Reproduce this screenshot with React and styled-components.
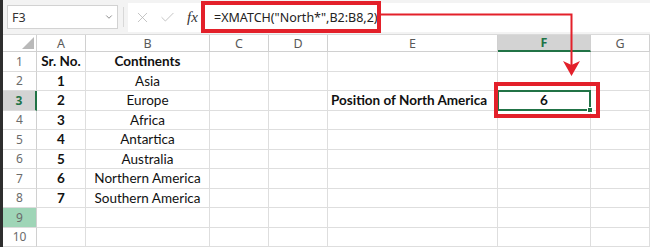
import styled, { createGlobalStyle } from "styled-components";
import { X, Check, ChevronDown } from "lucide-react";

const GlobalStyle = createGlobalStyle`
  html, body { margin: 0; padding: 0; background: #fff; }
  * { box-sizing: border-box; }
`;

const COLS = ["A", "B", "C", "D", "E", "F", "G"];

const data = [
  { no: "Sr. No.", name: "Continents", head: true },
  { no: "1", name: "Asia" },
  { no: "2", name: "Europe" },
  { no: "3", name: "Africa" },
  { no: "4", name: "Antartica" },
  { no: "5", name: "Australia" },
  { no: "6", name: "Northern America" },
  { no: "7", name: "Southern America" },
  { no: "", name: "" },
  { no: "", name: "" },
];

export default function App() {
  return (
    <>
      <GlobalStyle />
      <Page>
        <FormulaBar>
          <NameBox>
            <span>F3</span>
            <ChevronDown size={10} color="#777" strokeWidth={2} />
          </NameBox>
          <Divider />
          <IconGroup>
            <X size={17} color="#b4b4b4" strokeWidth={1.1} />
            <Check size={17} color="#b4b4b4" strokeWidth={1.1} />
            <Fx>fx</Fx>
          </IconGroup>
          <FormulaInput>=XMATCH("North*",B2:B8,2)</FormulaInput>
        </FormulaBar>

        <Sheet>
          <Corner>
            <svg width="12" height="12" viewBox="0 0 12 12">
              <polygon points="12,0 12,12 0,12" fill="#b9b9b9" />
            </svg>
          </Corner>
          {COLS.map((c) => (
            <ColHead key={c} $active={c === "F"}>
              {c}
            </ColHead>
          ))}

          {data.map((row, i) => {
            const r = i + 1;
            return [
              <RowHead key={`h${r}`} $active={r === 3} $picked={r === 9}>
                {r}
              </RowHead>,
              <Cell key={`a${r}`} $bold $center>
                {row.no}
              </Cell>,
              <Cell key={`b${r}`} $bold={row.head} $center>
                {row.name}
              </Cell>,
              <Cell key={`c${r}`} />,
              <Cell key={`d${r}`} />,
              <Cell key={`e${r}`} $bold>
                {r === 3 ? "Position of North America" : ""}
              </Cell>,
              r === 3 ? (
                <ActiveCell key={`f${r}`}>
                  6
                  <FillHandle />
                </ActiveCell>
              ) : (
                <Cell key={`f${r}`} />
              ),
              <Cell key={`g${r}`} />,
            ];
          })}
        </Sheet>

        <FormulaCallout />
        <CellCallout />
        <Arrow width="650" height="90" viewBox="0 0 650 90">
          <polyline
            points="378,14.5 571.5,14.5 571.5,66"
            fill="none"
            stroke="#e3202a"
            strokeWidth="2"
          />
          <polygon points="563,61 571.5,65 580,61 571.5,76" fill="#e3202a" />
        </Arrow>
      </Page>
    </>
  );
}

const Page = styled.div`
  position: relative;
  width: 650px;
  height: 247px;
  overflow: hidden;
  border-left: 3px solid #2e2e2e;
  background: #fff;
  display: flex;
  flex-direction: column;
`;

const FormulaBar = styled.div`
  height: 35px;
  flex-shrink: 0;
  display: flex;
  align-items: center;
  padding: 3px 0 3px 4px;
  background: #f3f3f3;
  border-bottom: 1px solid #dadada;
`;

const NameBox = styled.div`
  width: 111px;
  height: 24px;
  background: #fff;
  border: 1px solid #d2d2d2;
  display: flex;
  align-items: center;
  justify-content: space-between;
  padding: 0 3px 0 4px;
  font-family: "Noto Sans", sans-serif;
  font-size: 12.5px;
  color: #333;
`;

const Divider = styled.div`
  width: 1px;
  height: 20px;
  margin: 0 4px 0 5px;
  background: #d8d8d8;
`;

const IconGroup = styled.div`
  height: 29px;
  width: 77px;
  display: flex;
  align-items: center;
  gap: 8px;
  padding-left: 6px;
  background: #fff;
`;

const Fx = styled.span`
  font-family: "Liberation Serif", serif;
  font-style: italic;
  font-size: 15px;
  color: #333;
  margin-left: 3px;
`;

const FormulaInput = styled.div`
  flex: 1;
  height: 29px;
  background: #fff;
  display: flex;
  align-items: center;
  padding-left: 9px;
  font-family: "Noto Sans", sans-serif;
  font-size: 12.5px;
  color: #222;
  white-space: nowrap;
`;

const Sheet = styled.div`
  display: grid;
  grid-template-columns: 34px 49px 124px 59px 59px 170px 93px 59px;
  grid-template-rows: 17px repeat(10, 19.5px);
`;

const Corner = styled.div`
  display: flex;
  align-items: flex-end;
  justify-content: flex-end;
  padding: 0 2px 2px 0;
  border-right: 1px solid #d0d0d0;
  border-bottom: 1px solid #d0d0d0;
`;

const ColHead = styled.div`
  display: flex;
  align-items: center;
  justify-content: center;
  font-family: "Noto Sans", sans-serif;
  font-size: 12.5px;
  color: ${(p) => (p.$active ? "#217346" : "#595959")};
  font-weight: ${(p) => (p.$active ? 700 : 400)};
  background: ${(p) => (p.$active ? "#d3d3d3" : "#fff")};
  border-right: 1px solid #d0d0d0;
  border-bottom: ${(p) => (p.$active ? "2px solid #217346" : "1px solid #d0d0d0")};
`;

const RowHead = styled.div`
  display: flex;
  align-items: center;
  justify-content: center;
  font-family: "Noto Sans", sans-serif;
  font-size: 12px;
  color: ${(p) => (p.$active ? "#217346" : "#6b6b6b")};
  font-weight: ${(p) => (p.$active ? 700 : 400)};
  background: ${(p) => (p.$active ? "#d3d3d3" : p.$picked ? "#9fd5b7" : "#fff")};
  border-right: ${(p) => (p.$active ? "2px solid #217346" : "1px solid #d0d0d0")};
  border-bottom: 1px solid #dcdcdc;
`;

const Cell = styled.div`
  display: flex;
  align-items: center;
  justify-content: ${(p) => (p.$center ? "center" : "flex-start")};
  padding: 0 3px;
  font-family: Lato, "Liberation Sans", sans-serif;
  font-size: 13.5px;
  font-weight: ${(p) => (p.$bold ? 700 : 400)};
  color: #111;
  white-space: nowrap;
  border-right: 1px solid #dedede;
  border-bottom: 1px solid #dedede;
`;

const ActiveCell = styled(Cell)`
  position: relative;
  justify-content: center;
  font-weight: 700;
  border: 2px solid #217346;
  margin: -1px 0 0 -1px;
`;

const FillHandle = styled.span`
  position: absolute;
  right: -4px;
  bottom: -4px;
  width: 6px;
  height: 6px;
  background: #217346;
  border: 1px solid #fff;
`;

const FormulaCallout = styled.div`
  position: absolute;
  left: 198px;
  top: 1px;
  width: 180px;
  height: 32px;
  border: 4px solid #e3202a;
  pointer-events: none;
`;

const CellCallout = styled.div`
  position: absolute;
  left: 491px;
  top: 82px;
  width: 106px;
  height: 36px;
  border: 4px solid #e3202a;
  pointer-events: none;
`;

const Arrow = styled.svg`
  position: absolute;
  left: -3px;
  top: 0;
  pointer-events: none;
`;
